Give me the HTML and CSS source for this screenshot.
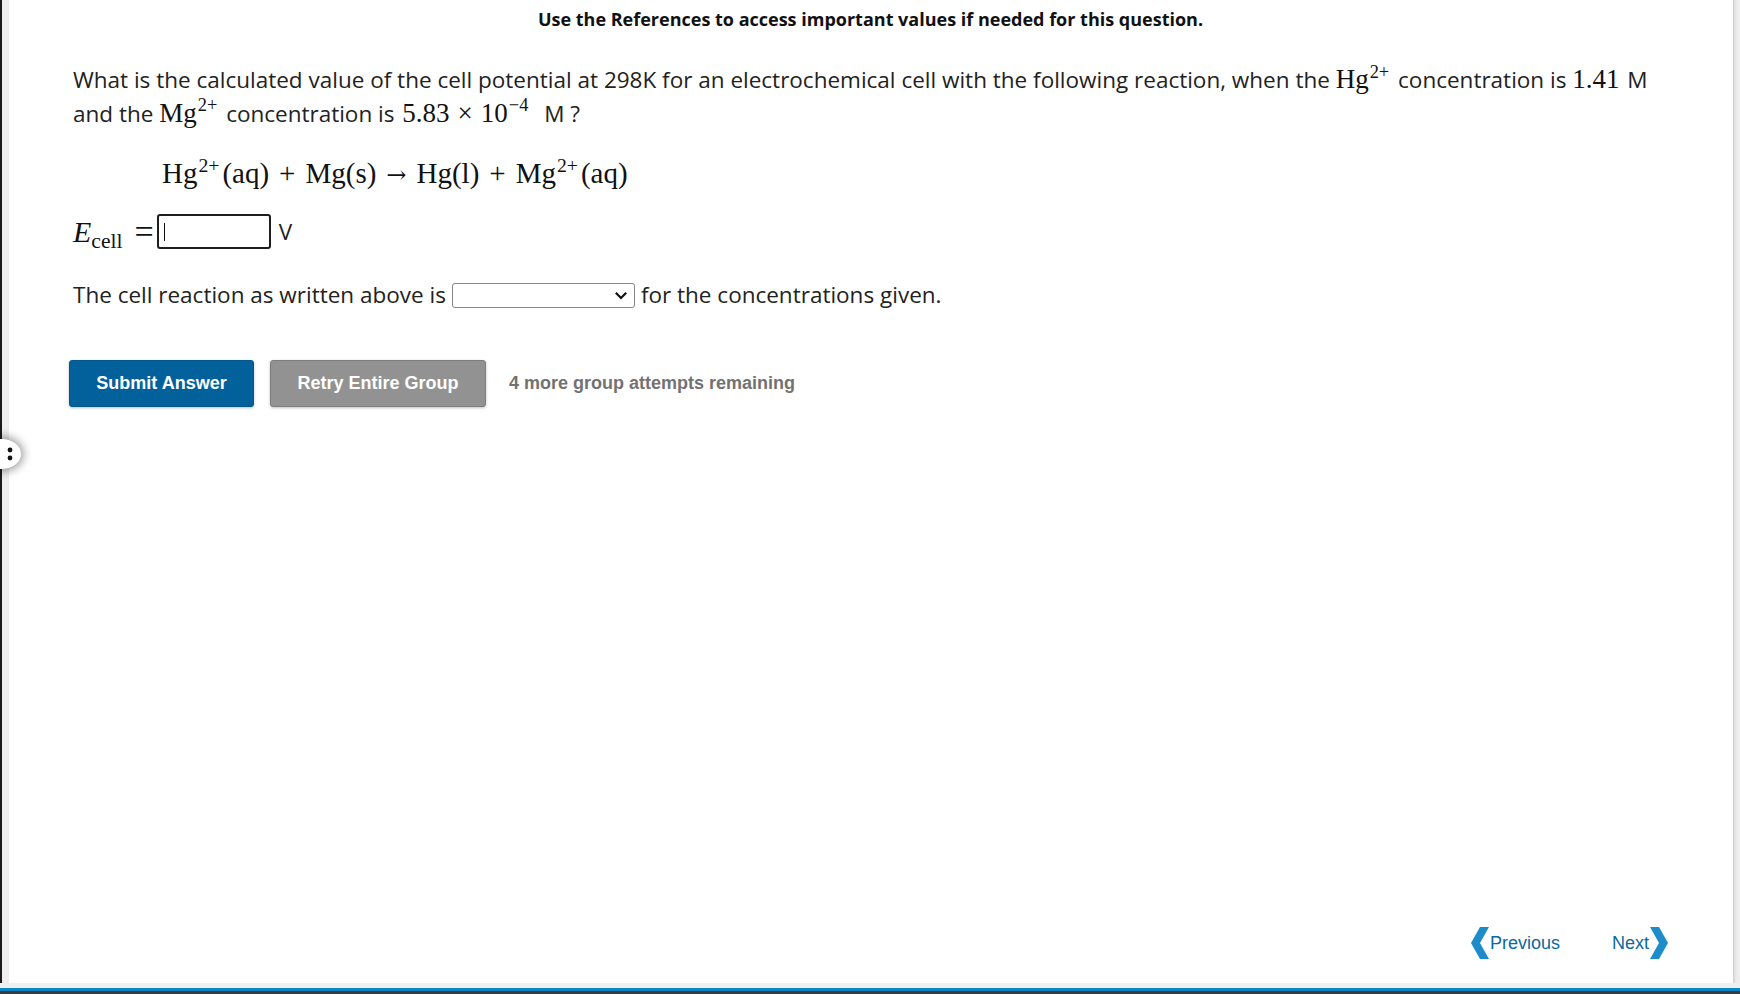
FILE: index.html
```html
<!DOCTYPE html>
<html lang="en">
<head>
<meta charset="utf-8">
<title>Cell potential question</title>
<link rel="stylesheet" href="styles.css">
</head>
<body>
<div class="page">
  <div class="shell">
    <div class="rail-left"></div>
    <main class="panel">
      <p class="refs">Use the References to access important values if needed for this question.</p>

      <p class="question">What is the calculated value of the cell potential at 298K for an electrochemical cell with the following reaction, when the <span class="m">Hg<sup>2+</sup></span> concentration is <span class="m num">1.41</span> M and the <span class="m">Mg<sup>2+</sup></span> concentration is <span class="m sci">5.83<span class="times">×</span>10<sup>−4</sup></span> M ?</p>

      <div class="equation m">Hg<sup>2+</sup>(aq)<span class="bin">+</span>Mg(s)<span class="rel">→</span>Hg(l)<span class="bin">+</span>Mg<sup>2+</sup>(aq)</div>

      <div class="ecell-row">
        <span class="m ecell"><i>E</i><sub>cell</sub></span>
        <span class="m eq">=</span>
        <span class="field"><input class="answer" type="text" aria-label="E cell"></span>
        <span class="unit">V</span>
      </div>

      <div class="select-row">
        <span>The cell reaction as written above is</span>
        <span class="select">
          <svg class="caret" width="14" height="9" viewBox="0 0 14 9"><path d="M1.8 1.8 L7 7 L12.2 1.8" fill="none" stroke="#111" stroke-width="2.2"/></svg>
        </span>
        <span>for the concentrations given.</span>
      </div>

      <div class="actions">
        <button class="btn btn-submit" type="button">Submit Answer</button>
        <button class="btn btn-retry" type="button">Retry Entire Group</button>
        <span class="attempts">4 more group attempts remaining</span>
      </div>

      <nav class="pager">
        <a class="prev" href="#">
          <svg width="18" height="32" viewBox="0 0 18 32"><polygon points="18,0 9,0 0,16 9,32 18,32 9,16" fill="#1d8ccb"/></svg>
          <span>Previous</span>
        </a>
        <a class="next" href="#">
          <span>Next</span>
          <svg width="18" height="32" viewBox="0 0 18 32"><polygon points="0,0 9,0 18,16 9,32 0,32 9,16" fill="#1d8ccb"/></svg>
        </a>
      </nav>

      <div class="handle">
        <svg width="6" height="14" viewBox="0 0 6 14"><circle cx="3" cy="3" r="2.4" fill="#111"/><circle cx="3" cy="11" r="2.4" fill="#111"/></svg>
      </div>
    </main>
    <div class="rail-right"></div>
  </div>
  <div class="band-grey"></div>
  <div class="band-blue"></div>
  <div class="band-dark"></div>
</div>
</body>
</html>
```
FILE: styles.css
```css
html, body {
  margin: 0;
  padding: 0;
  background: #efefef;
}
body {
  font-family: "Open Sans", "Liberation Sans", sans-serif;
  color: #222;
}
.page {
  width: 1740px;
  height: 994px;
  display: flex;
  flex-direction: column;
  overflow: hidden;
}
.shell {
  flex: 1;
  display: flex;
  min-height: 0;
}
.rail-left {
  width: 7px;
  border-left: 2px solid #1b1b1b;
  background: #efefef;
}
.rail-right {
  width: 7px;
  background: linear-gradient(to right, #cfcfcf, #e9e9e9 40%, #f0f0f0);
}
.band-grey { height: 5px; background: #efefef; }
.band-blue { height: 3px; background: #0a86c8; }
.band-dark { height: 3px; background: #3b3b3b; }

.panel {
  flex: 1;
  background: #fff;
  position: relative;
  display: flex;
  flex-direction: column;
  padding: 0 65px 24px 64px;
}

.refs {
  margin: 7px 0 0;
  text-align: center;
  font-weight: 700;
  font-size: 18px;
  line-height: 24px;
  color: #111;
}

.question {
  margin: 32px 0 0;
  font-size: 22.5px;
  line-height: 33.5px;
  color: #222;
}

.m {
  font-family: "Liberation Serif", "DejaVu Serif", serif;
  font-size: 27px;
  color: #111;
}
.m sup, .m sub {
  font-size: 68%;
  line-height: 0;
}
.m sup { vertical-align: 0.55em; margin: 0 3px 0 1px; }
.times { margin: 0 8px; }
.question .num { margin-right: 2px; }
.question .sci { margin-left: 2px; }
.question .sci sup { margin-right: 10px; }

.equation {
  margin: 24px 0 0 89px;
  font-size: 29px;
  line-height: 38px;
}
.equation .bin { margin: 0 10px; }
.equation .rel {
  margin: 0 10px;
  font-family: "DejaVu Serif", serif;
  font-size: 24px;
}

.ecell-row {
  margin-top: 20px;
  display: flex;
  align-items: center;
  height: 35px;
}
.ecell {
  font-size: 30px;
}
.ecell sub {
  font-size: 72%;
  vertical-align: -0.3em;
}
.eq {
  margin-left: 12px;
  font-size: 34px;
  line-height: 1;
}
.field {
  position: relative;
  display: inline-block;
  margin-left: 3px;
}
.field::after {
  content: "";
  position: absolute;
  left: 7px;
  top: 9px;
  width: 1px;
  height: 18px;
  background: #111;
}
.answer {
  display: block;
  box-sizing: border-box;
  width: 114px;
  height: 35px;
  border: 2px solid #1e1e1e;
  border-radius: 3px;
  background: #fff;
  padding: 0;
  margin: 0;
}
.unit {
  margin-left: 8px;
  font-size: 22.5px;
  color: #222;
}

.select-row {
  margin-top: 29px;
  display: flex;
  align-items: center;
  gap: 6px;
  font-size: 22.5px;
  line-height: 34px;
}
.select {
  box-sizing: border-box;
  width: 183px;
  height: 25px;
  border: 1px solid #858585;
  border-radius: 3px;
  display: flex;
  align-items: center;
  justify-content: flex-end;
  padding-right: 6px;
}
.caret { display: block; }

.actions {
  margin-top: 48px;
  display: flex;
  align-items: center;
  margin-left: -4px;
}
.btn {
  height: 47px;
  border-radius: 3px;
  font-family: "Liberation Sans", Arial, sans-serif;
  font-weight: 700;
  font-size: 18px;
  color: #fff;
  padding: 0;
  box-shadow: 0 1px 3px rgba(0,0,0,0.25);
}
.btn-submit {
  width: 185px;
  background: #02619b;
  border: 1px solid #02588c;
}
.btn-retry {
  width: 216px;
  margin-left: 16px;
  background: #929292;
  border: 1px solid #7e7e7e;
}
.attempts {
  margin-left: 23px;
  font-family: "Liberation Sans", Arial, sans-serif;
  font-weight: 700;
  font-size: 18px;
  color: #727272;
}

.pager {
  margin-top: auto;
  display: flex;
  justify-content: flex-end;
  align-items: center;
  gap: 52px;
  font-family: "Liberation Sans", Arial, sans-serif;
  font-size: 18px;
}
.pager a {
  display: flex;
  align-items: center;
  gap: 1px;
  color: #0b68a0;
  text-decoration: none;
}
.pager svg { display: block; }

.handle {
  position: absolute;
  left: -26px;
  top: 439px;
  width: 30px;
  height: 30px;
  border-radius: 50%;
  background: #fff;
  box-shadow: 0 0 8px 3px rgba(0,0,0,0.35);
  display: flex;
  align-items: center;
  justify-content: flex-end;
  padding-right: 8px;
}
.handle svg { display: block; }
```
